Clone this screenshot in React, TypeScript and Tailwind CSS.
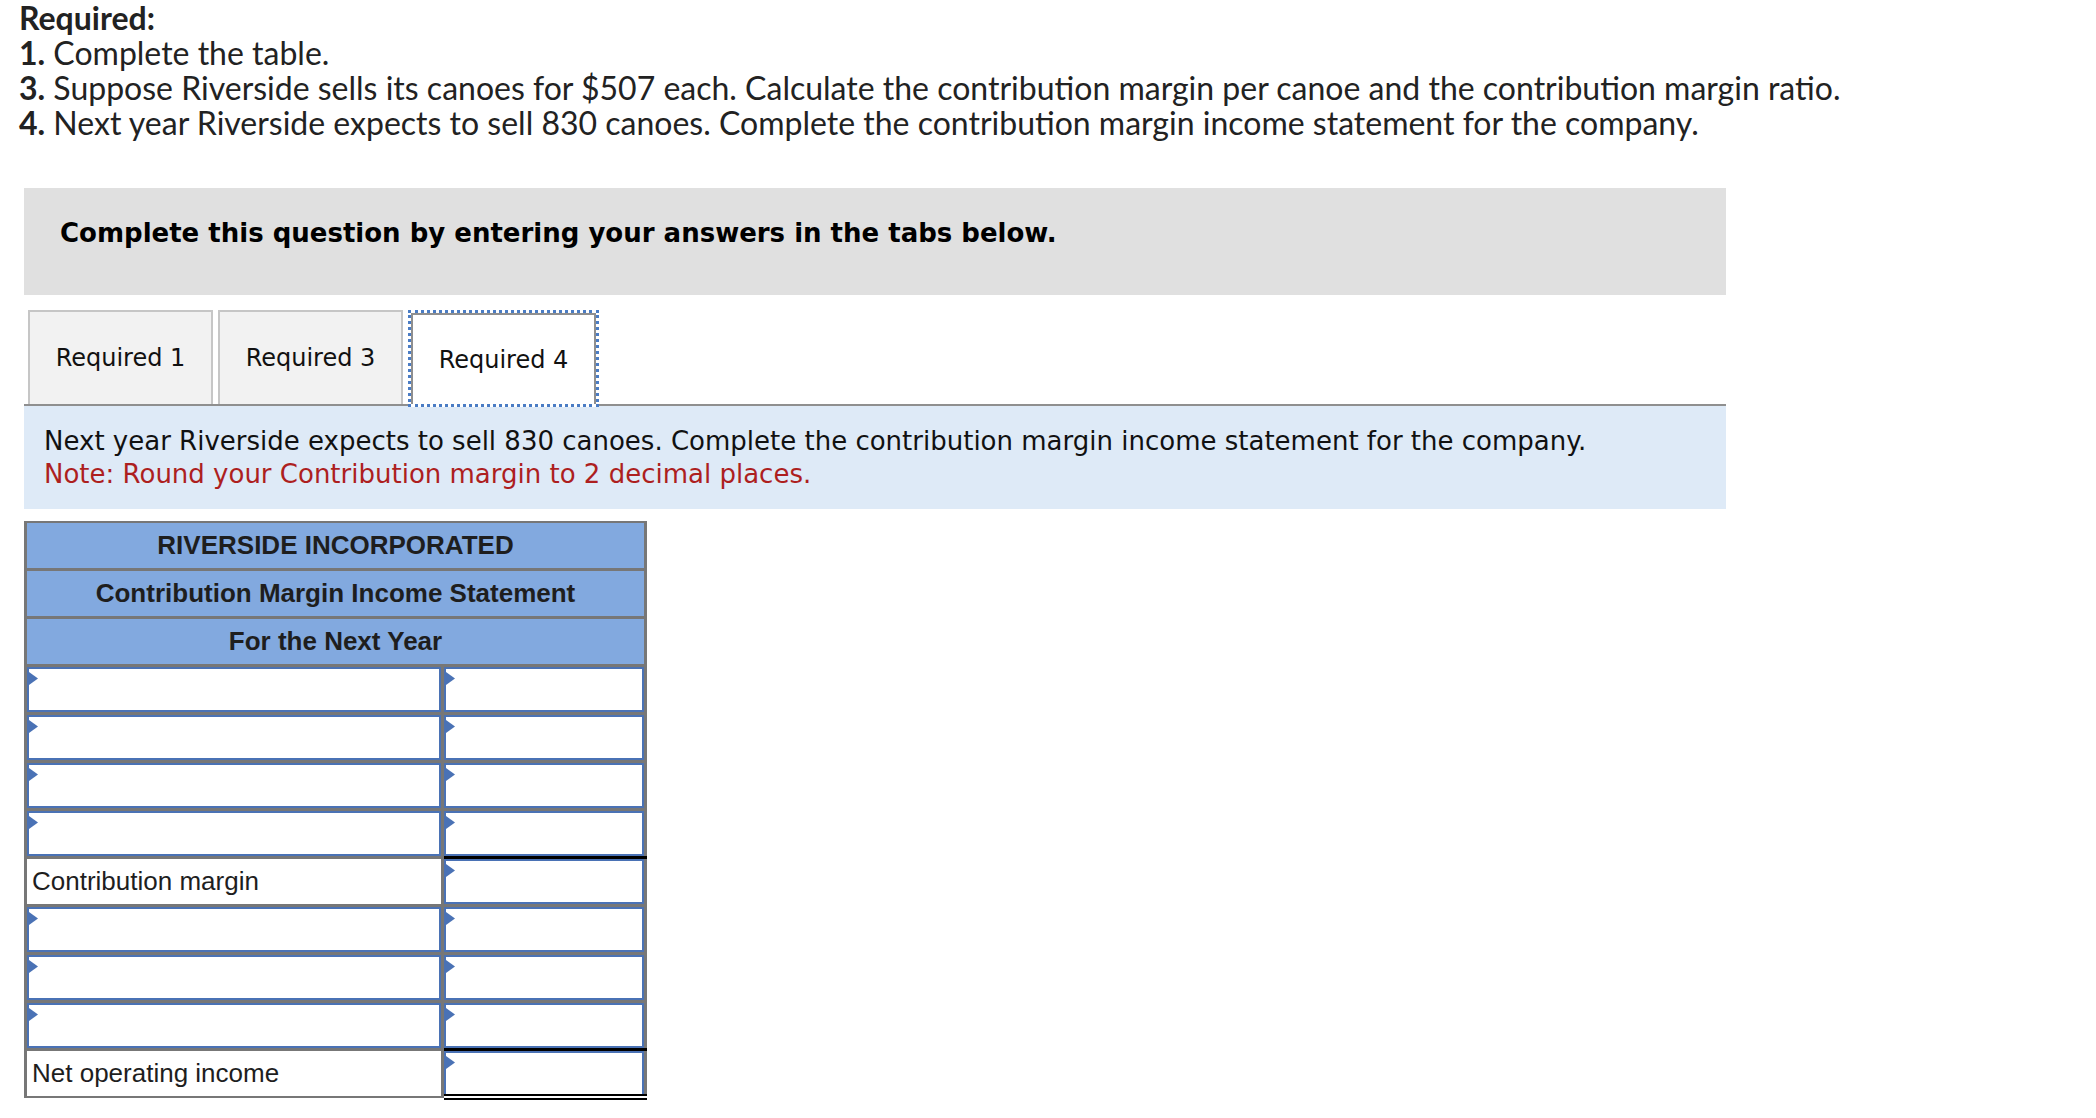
import React from "react";

type Row =
  | { kind: "input"; underline?: "single" | "double" }
  | { kind: "label"; text: string; underline?: "single" | "double" };

const rows: Row[] = [
  { kind: "input" },
  { kind: "input" },
  { kind: "input" },
  { kind: "input", underline: "single" },
  { kind: "label", text: "Contribution margin" },
  { kind: "input" },
  { kind: "input" },
  { kind: "input", underline: "single" },
  { kind: "label", text: "Net operating income", underline: "double" },
];

function Marker() {
  return (
    <svg
      className="absolute left-0 top-[3px]"
      width="9"
      height="13"
      viewBox="0 0 9 13"
    >
      <polygon points="0,0 9,6.5 0,13" fill="#4a72b5" />
    </svg>
  );
}

function InputCell({ underline }: { underline?: "single" | "double" }) {
  return (
    <div className="relative h-full bg-white border-2 border-[#4a72b5]">
      <Marker />
      {underline === "single" && (
        <div className="absolute -left-[2px] -right-[5px] -bottom-[5px] h-[3px] bg-black" />
      )}
      {underline === "double" && (
        <div className="absolute -left-[2px] -right-[5px] -bottom-[6px] h-[6px] border-y-2 border-black bg-white" />
      )}
    </div>
  );
}

function Tab({ label, active }: { label: string; active?: boolean }) {
  if (active) {
    return (
      <div className="h-[97px] -mt-[3px] mb-[-3px] border-[3px] border-dotted border-[#4a7cc4] bg-white">
        <div className="h-full w-[185px] flex items-center justify-center border-2 border-[#8f8f8f] border-b-0 text-[24px] text-[#111]">
          {label}
        </div>
      </div>
    );
  }
  return (
    <div className="h-[94px] w-[185px] flex items-center justify-center bg-[#f2f2f2] border-2 border-b-0 border-[#c6c6c6] text-[24px] text-[#111]">
      {label}
    </div>
  );
}

export default function App() {
  return (
    <div className="min-h-screen bg-white pb-4">
      <div className="pl-[19px] font-['Lato',sans-serif] text-[32px] leading-[35px] text-[#222]">
        <div className="font-bold">Required:</div>
        <div>
          <span className="font-bold">1.</span> Complete the table.
        </div>
        <div>
          <span className="font-bold">3.</span> Suppose Riverside sells its canoes for $507 each. Calculate the
          contribution margin per canoe and the contribution margin ratio.
        </div>
        <div>
          <span className="font-bold">4.</span> Next year Riverside expects to sell 830 canoes. Complete the
          contribution margin income statement for the company.
        </div>
      </div>

      <div className="ml-[24px] w-[1702px] mt-[48px] font-['DejaVu_Sans',Verdana,sans-serif]">
        <div className="h-[107px] bg-[#e0e0e0] pl-[36px] pt-[29px] text-[26px] leading-[32px] font-bold text-black">
          Complete this question by entering your answers in the tabs below.
        </div>

        <div className="mt-[15px] pl-[4px] flex items-end gap-[5px] border-b-2 border-[#8f8f8f]">
          <Tab label="Required 1" />
          <Tab label="Required 3" />
          <Tab label="Required 4" active />
        </div>

        <div className="bg-[#deeaf7] pl-[20px] pt-[19px] pb-[18px] text-[26px] leading-[33px] text-[#111]">
          <div>
            Next year Riverside expects to sell 830 canoes. Complete the contribution margin income
            statement for the company.
          </div>
          <div className="text-[#ad1f1f]">Note: Round your Contribution margin to 2 decimal places.</div>
        </div>
      </div>

      <div className="ml-[24px] mt-[12px] w-[623px] bg-[#777777] px-[3px] py-[2px] flex flex-col gap-[3px] font-['Liberation_Sans',Arial,sans-serif] text-[26px] text-[#1e1e1e]">
        {["RIVERSIDE INCORPORATED", "Contribution Margin Income Statement", "For the Next Year"].map(
          (h) => (
            <div
              key={h}
              className="h-[45px] bg-[#82a9df] flex items-center justify-center font-bold"
            >
              {h}
            </div>
          )
        )}
        {rows.map((r, i) => (
          <div key={i} className="grid grid-cols-[414px_200px] gap-x-[3px] h-[45px]">
            {r.kind === "input" ? (
              <InputCell />
            ) : (
              <div className="bg-white flex items-center pl-[5px]">{r.text}</div>
            )}
            <InputCell underline={r.underline} />
          </div>
        ))}
      </div>
    </div>
  );
}
